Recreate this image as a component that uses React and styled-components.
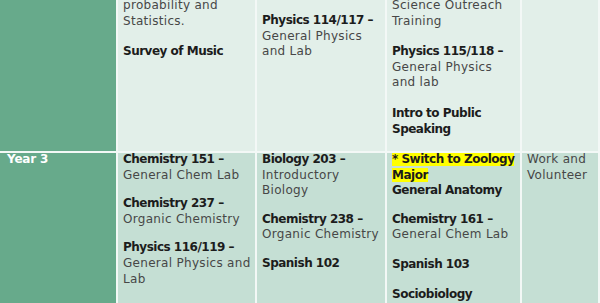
import React from "react";
import styled, { createGlobalStyle } from "styled-components";

const GlobalStyle = createGlobalStyle`
  html, body {
    margin: 0;
    padding: 0;
    background: #ffffff;
    overflow: hidden;
  }
`;

const tones = {
  label: "#67aa8b",
  light: "#e2efe9",
  mid: "#c5dfd4",
};

const Table = styled.div`
  display: grid;
  grid-template-columns: 116px 137px 128px 133px 76px;
  grid-template-rows: 151px 150px;
  gap: 2px;
  width: 600px;
  height: 303px;
  background: #f3f8f6;
  overflow: hidden;
  font-family: "DejaVu Sans", "Liberation Sans", sans-serif;
  font-size: 12px;
  line-height: 15.6px;
`;

const Cell = styled.div`
  background: ${(p) => tones[p.$tone]};
  padding: 0 3px 0 5px;
  overflow: hidden;
  & > *:first-child {
    margin-top: ${(p) => (p.$lead ?? -1)}px;
  }
`;

const YearLabel = styled.div`
  color: #ffffff;
  font-weight: bold;
  letter-spacing: -0.2px;
  padding-left: 2px;
`;

const Course = styled.p`
  margin: ${(p) => p.$gap ?? 13}px 0 0;
`;

const Title = styled.span`
  display: block;
  font-weight: bold;
  color: #1c1c1c;
  letter-spacing: -0.5px;
`;

const Desc = styled.span`
  color: #474747;
  letter-spacing: 0.3px;
`;

const Mark = styled.span`
  background: #ffff00;
  font-weight: bold;
  color: #1c1c1c;
  letter-spacing: -0.5px;
`;

export default function App() {
  return (
    <>
      <GlobalStyle />
      <Table>
        {/* Year 2 (tail, cut off above) */}
        <Cell $tone="label" />
        <Cell $tone="light" $lead={-2}>
          <Course>
            <Desc>
              probability and
              <br />
              Statistics.
            </Desc>
          </Course>
          <Course $gap={15}>
            <Title>Survey of Music</Title>
          </Course>
        </Cell>
        <Cell $tone="light" $lead={13}>
          <Course>
            <Title>Physics 114/117 –</Title>
            <Desc>General Physics and Lab</Desc>
          </Course>
        </Cell>
        <Cell $tone="light" $lead={-2}>
          <Course>
            <Desc>Science Outreach Training</Desc>
          </Course>
          <Course $gap={15}>
            <Title>Physics 115/118 –</Title>
            <Desc>General Physics and lab</Desc>
          </Course>
          <Course $gap={15}>
            <Title>Intro to Public Speaking</Title>
          </Course>
        </Cell>
        <Cell $tone="light" />

        {/* Year 3 */}
        <Cell $tone="label">
          <YearLabel>Year 3</YearLabel>
        </Cell>
        <Cell $tone="mid">
          <Course>
            <Title>Chemistry 151 –</Title>
            <Desc>General Chem Lab</Desc>
          </Course>
          <Course>
            <Title>Chemistry 237 –</Title>
            <Desc>Organic Chemistry</Desc>
          </Course>
          <Course>
            <Title>Physics 116/119 –</Title>
            <Desc>General Physics and Lab</Desc>
          </Course>
        </Cell>
        <Cell $tone="mid">
          <Course>
            <Title>Biology 203 –</Title>
            <Desc>Introductory Biology</Desc>
          </Course>
          <Course>
            <Title>Chemistry 238 –</Title>
            <Desc>Organic Chemistry</Desc>
          </Course>
          <Course>
            <Title>Spanish 102</Title>
          </Course>
        </Cell>
        <Cell $tone="mid">
          <Course>
            <Mark>* Switch to Zoology Major</Mark>
            <Title>General Anatomy</Title>
          </Course>
          <Course>
            <Title>Chemistry 161 –</Title>
            <Desc>General Chem Lab</Desc>
          </Course>
          <Course $gap={14}>
            <Title>Spanish 103</Title>
          </Course>
          <Course $gap={14}>
            <Title>Sociobiology</Title>
          </Course>
        </Cell>
        <Cell $tone="mid">
          <Course>
            <Desc>Work and Volunteer</Desc>
          </Course>
        </Cell>
      </Table>
    </>
  );
}
